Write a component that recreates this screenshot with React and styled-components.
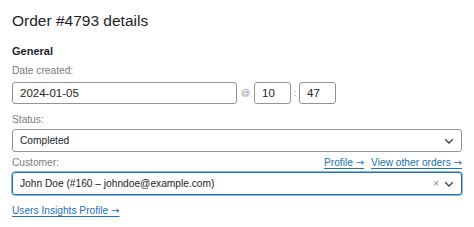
import styled, { createGlobalStyle } from "styled-components"

const Global = createGlobalStyle`
  html, body {
    margin: 0;
    background: #fff;
  }
  body {
    font-family: "Liberation Sans", Arial, sans-serif;
    color: #1d2327;
  }
`

const Panel = styled.div`
  padding: 10px 12px 0 12px;
  width: 450px;
`

const Title = styled.h2`
  font-size: 15.5px;
  font-weight: 400;
  line-height: 22px;
  margin: 0;
  color: #1d2327;
`

const Section = styled.h3`
  font-size: 11px;
  font-weight: 700;
  line-height: 14px;
  margin: 12px 0 0;
  color: #1d2327;
`

const Field = styled.div`
  margin-top: ${(p) => p.$gap}px;
`

const LabelRow = styled.div`
  display: flex;
  justify-content: space-between;
  align-items: baseline;
  line-height: 13px;
  height: 14px;
`

const Label = styled.label`
  font-size: 10.2px;
  color: #787c82;
`

const Links = styled.div`
  display: flex;
  gap: 7px;
`

const Link = styled.a`
  font-size: 10.2px;
  color: #2271b1;
  text-decoration: underline;
  text-underline-offset: 2px;
`

const Arrow = styled.span`
  font-family: "DejaVu Sans", sans-serif;
  font-size: 10px;
`

const Row = styled.div`
  display: flex;
  align-items: center;
  margin-top: 4px;
`

const Input = styled.div`
  box-sizing: border-box;
  width: ${(p) => p.$w}px;
  height: 22px;
  border: 1px solid #949494;
  border-radius: 3px;
  font-size: 11.5px;
  padding: 0 6px 0 7px;
  display: flex;
  align-items: center;
  color: #1d2327;
`

const Sep = styled.span`
  font-size: 9px;
  color: #8c8f94;
  width: ${(p) => p.$w}px;
  text-align: center;
`

const Select = styled.div`
  box-sizing: border-box;
  height: 23px;
  margin-top: 2px;
  border: 1px solid ${(p) => (p.$focus ? "#2271b1" : "#949494")};
  box-shadow: ${(p) => (p.$focus ? "0 0 0 0.5px #2271b1" : "none")};
  border-radius: 3px;
  font-size: 10.2px;
  padding: 0 7px 0 7px;
  display: flex;
  align-items: center;
  gap: 5px;
  color: #1d2327;
`

const Value = styled.span`
  flex: 1;
`

const Clear = styled.span`
  font-size: 10px;
  color: #8c8f94;
`

const Footer = styled.div`
  margin-top: 9px;
  font-size: 10.2px;
  line-height: 13px;
`

function Chevron() {
  return (
    <svg width="10" height="10" viewBox="0 0 10 10" fill="none">
      <path d="M1.2 3.3 L5 7 L8.8 3.3" stroke="#3c434a" strokeWidth="1.3" />
    </svg>
  )
}

export default function App() {
  return (
    <>
      <Global />
      <Panel>
        <Title>Order #4793 details</Title>
        <Section>General</Section>
        <Field $gap={6}>
          <LabelRow>
            <Label>Date created:</Label>
          </LabelRow>
          <Row>
            <Input $w={225}>2024-01-05</Input>
            <Sep $w={17}>@</Sep>
            <Input $w={37}>10</Input>
            <Sep $w={8}>:</Sep>
            <Input $w={37}>47</Input>
          </Row>
        </Field>
        <Field $gap={9}>
          <LabelRow>
            <Label>Status:</Label>
          </LabelRow>
          <Select>
            <Value>Completed</Value>
            <Chevron />
          </Select>
        </Field>
        <Field $gap={4}>
          <LabelRow>
            <Label>Customer:</Label>
            <Links>
              <Link>Profile <Arrow>→</Arrow></Link>
              <Link>View other orders <Arrow>→</Arrow></Link>
            </Links>
          </LabelRow>
          <Select $focus>
            <Value>John Doe (#160 – johndoe@example.com)</Value>
            <Clear>×</Clear>
            <Chevron />
          </Select>
        </Field>
        <Footer>
          <Link>Users Insights Profile <Arrow>→</Arrow></Link>
        </Footer>
      </Panel>
    </>
  )
}
